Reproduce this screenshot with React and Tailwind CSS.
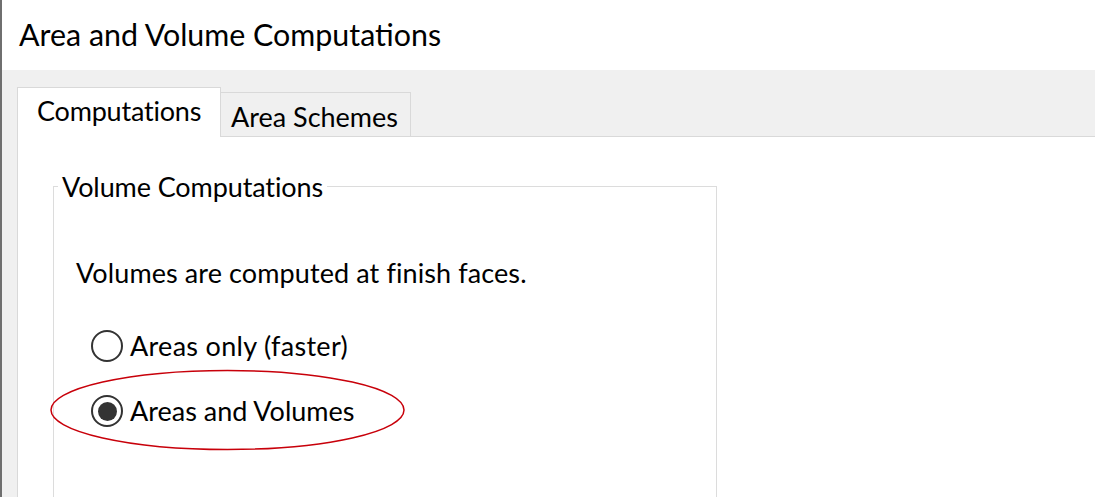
export default function App() {
  const font = { fontFamily: 'Lato, "Noto Sans", sans-serif' }
  return (
    <div className="relative flex h-[497px] w-[1095px] overflow-hidden bg-white text-[27px] leading-[32px] text-black" style={font}>
      {/* window edge */}
      <div className="w-[2px] shrink-0 bg-[#6f6f6f]" />

      <div className="flex flex-1 flex-col">
        {/* Title */}
        <div className="h-[70px] shrink-0 pl-[17px] pt-[18px] text-[30.4px]">Area and Volume Computations</div>

        <div className="flex flex-1 flex-col bg-[#f0f0f0] pl-[15px]">
          {/* Tabs */}
          <div className="flex h-[67px] shrink-0 items-end">
            <div className="h-[50px] w-[204px] border-x border-t border-[#d9d9d9] bg-white pl-[19px] pt-[7px] tracking-[-0.2px]">Computations</div>
            <div className="h-[45px] w-[190px] border-r border-t border-b border-[#d9d9d9] bg-[#f0f0f0] pl-[10px] pt-[8px]">Area Schemes</div>
            <div className="h-full flex-1 border-b border-[#d9d9d9]" />
          </div>

          {/* Tab page */}
          <div className="flex-1 border-l border-[#d9d9d9] bg-white pl-[35px] pt-[49px]">
            <div className="relative h-[400px] w-[664px] border border-[#dcdcdc] pl-[22px] pt-[70px]">
              <span className="absolute -top-[16px] left-[4px] bg-white px-[4px] tracking-[-0.1px]">Volume Computations</span>
              <div className="tracking-[0.1px]">Volumes are computed at finish faces.</div>

              <div className="ml-[15px] mt-[41px] flex flex-col gap-[33px]">
                <div className="flex items-center gap-[7px]">
                  <span className="h-[32px] w-[32px] rounded-full border-2 border-[#333333] bg-white" />
                  <span className="tracking-[0.3px]">Areas only (faster)</span>
                </div>
                <div className="flex items-center gap-[7px]">
                  <span className="flex h-[32px] w-[32px] items-center justify-center rounded-full border-2 border-[#333333] bg-white">
                    <span className="h-[19px] w-[19px] rounded-full bg-[#333333]" />
                  </span>
                  <span>Areas and Volumes</span>
                </div>
              </div>
            </div>
          </div>
        </div>
      </div>

      {/* red markup ellipse */}
      <svg className="pointer-events-none absolute left-0 top-0" width="1095" height="497">
        <ellipse cx="227.5" cy="410" rx="176.5" ry="39.5" fill="none" stroke="#c8000a" strokeWidth="1.5" />
      </svg>
    </div>
  )
}
